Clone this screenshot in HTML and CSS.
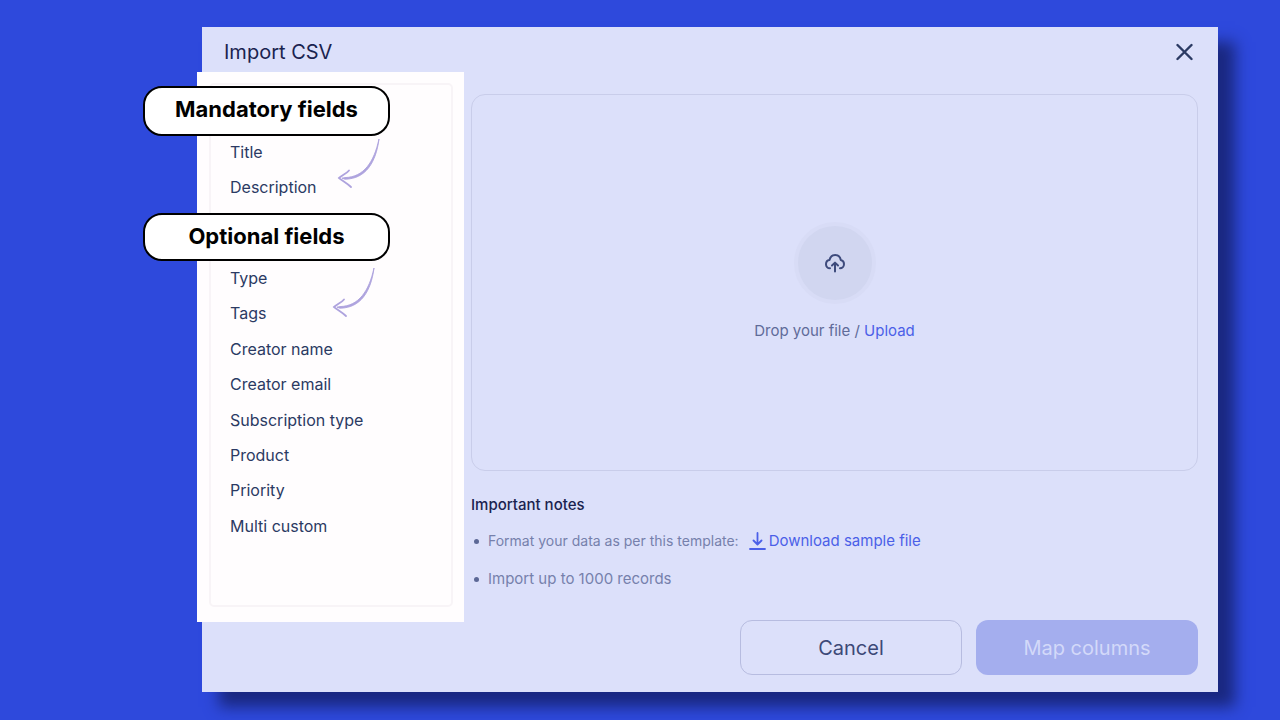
FILE: index.html
```html
<!DOCTYPE html>
<html lang="en">
<head>
<meta charset="utf-8">
<meta name="viewport" content="width=device-width, initial-scale=1">
<title>Import CSV</title>
<link rel="stylesheet" href="styles.css">
</head>
<body>
<main class="dialog" role="dialog" aria-labelledby="dialog-title">
  <header class="dialog-header">
    <h1 class="dialog-title" id="dialog-title">Import CSV</h1>
    <button class="close" type="button" aria-label="Close">
      <svg width="18" height="18" viewBox="0 0 18 18" fill="none" stroke="currentColor" stroke-width="2.4" stroke-linecap="round"><path d="M1.500 2l14 14M15.500 2l-14 14"/></svg>
    </button>
  </header>
  <div class="dialog-body">
    <aside class="side">
      <div class="fields">
        <section class="group">
          <h2 class="callout callout-mandatory">Mandatory fields</h2>
          <svg class="arrow arrow-mandatory" width="46" height="54" viewBox="0 0 46 54" fill="#aea3de"><path d="M42 2C39 25 29 42 8 42.2L5 41.2L8 40.6C27 40 37 25 42 2Z" stroke="#aea3de" stroke-width=".9" stroke-linejoin="round"/><path d="M12 33.500C9.500 36.500 5 38 2 41C5 43.500 10 46 14 50" fill="none" stroke="#aea3de" stroke-width="1.800" stroke-linecap="round"/></svg>
          <ul class="list">
            <li>Title</li>
            <li>Description</li>
          </ul>
        </section>
        <section class="group">
          <h2 class="callout callout-optional">Optional fields</h2>
          <svg class="arrow arrow-optional" width="46" height="54" viewBox="0 0 46 54" fill="#aea3de"><path d="M42 2C39 25 29 42 8 42.2L5 41.2L8 40.6C27 40 37 25 42 2Z" stroke="#aea3de" stroke-width=".9" stroke-linejoin="round"/><path d="M12 33.500C9.500 36.500 5 38 2 41C5 43.500 10 46 14 50" fill="none" stroke="#aea3de" stroke-width="1.800" stroke-linecap="round"/></svg>
          <ul class="list list-optional">
            <li>Type</li>
            <li>Tags</li>
            <li>Creator name</li>
            <li>Creator email</li>
            <li>Subscription type</li>
            <li>Product</li>
            <li>Priority</li>
            <li>Multi custom</li>
          </ul>
        </section>
      </div>
    </aside>
    <section class="content">
      <div class="dropzone">
        <span class="cloud">
          <svg width="20" height="20" viewBox="0 0 20 20" fill="none" stroke="currentColor" stroke-width="2" stroke-linecap="round" stroke-linejoin="round"><path d="M5 15.300C2.500 15.300 1 13.300 1 11.200C1 9 2.500 7.300 4.500 7C5.200 4 7.300 2 10.200 2C13 2 15.200 4 15.800 7C17.700 7.400 19 9.100 19 11.100C19 13.400 17.300 15.300 15 15.300M10 18.500V10M7 12.500L10 9.600L13 12.500"/></svg>
        </span>
        <p class="drop-text">Drop your file / <a class="link" href="#">Upload</a></p>
      </div>
      <h2 class="notes-title">Important notes</h2>
      <ul class="notes">
        <li><span class="hint">Format your data as per this template:</span>
          <a class="link download" href="#"><svg width="17" height="18" viewBox="0 0 17 18" fill="none" stroke="currentColor" stroke-width="1.800" stroke-linecap="round" stroke-linejoin="round"><path d="M8.500 1v11M4.500 8.500l4 4 4-4M1 17h15"/></svg>Download sample file</a>
        </li>
        <li>Import up to 1000 records</li>
      </ul>
    </section>
  </div>
  <footer class="actions">
    <button class="button" type="button">Cancel</button>
    <button class="button button-primary" type="button" disabled>Map columns</button>
  </footer>
</main>
</body>
</html>
```

FILE: styles.css
```css
* { box-sizing: border-box; }

body {
  margin: 0;
  min-height: 100vh;
  display: flex;
  padding: 27px 62px 28px 202px;
  background: #2e49dc;
  color: #2b3a63;
  font: 16px/20px Inter, "Liberation Sans", sans-serif;
}

h1, h2, p, ul { margin: 0; padding: 0; font-weight: 400; }
ul { list-style: none; }
button { font: inherit; color: inherit; cursor: pointer; }

.dialog {
  flex: 1;
  display: flex;
  flex-direction: column;
  background: #dce0fa;
  box-shadow: 17px 15px 14px #1a2880;
}

.dialog-header {
  display: flex;
  align-items: center;
  justify-content: space-between;
  padding: 10px 20px 5px 22px;
}
.dialog-title { font-size: 20px; line-height: 30px; color: #1a234f; }
.close {
  display: grid;
  place-items: center;
  padding: 4px;
  border: 0;
  background: none;
}

.dialog-body { flex: 1; display: flex; gap: 7px; padding-right: 20px; }

.side {
  flex: 0 0 267px;
  display: flex;
  margin-left: -5px;
  padding: 11px 11px 15px 12px;
  background: #fffdfe;
}
.fields {
  position: relative;
  flex: 1;
  display: flex;
  flex-direction: column;
  gap: 56px;
  padding: 50px 19px 0;
  border: 2px solid #f8f4f7;
  border-radius: 5px;
}
.list { line-height: 35px; }
.list-optional { display: grid; grid-auto-rows: 1fr; height: 283px; }

.callout {
  position: absolute;
  left: -68px;
  width: 247px;
  padding: 8px 0 12px;
  border: 2px solid #000;
  border-radius: 19px;
  background: #fff;
  color: #000;
  font-size: 22px;
  line-height: 26px;
  font-weight: 700;
  text-align: center;
}
.callout-mandatory { top: 1px; }
.callout-optional { top: 128px; padding-bottom: 10px; }
.arrow { position: absolute; }
.arrow-mandatory { left: 126px; top: 52px; }
.arrow-optional { left: 121px; top: 181px; }

.content { flex: 1; display: flex; flex-direction: column; padding: 22px 0 33px; }
.dropzone {
  flex: 1;
  display: flex;
  flex-direction: column;
  align-items: center;
  justify-content: center;
  gap: 17px;
  padding-bottom: 2px;
  border: 1px solid #c9cdea;
  border-radius: 14px;
}
.cloud {
  display: grid;
  place-items: center;
  width: 82px;
  height: 82px;
  border: 4px solid #d8dcf6;
  border-radius: 50%;
  background: #d1d6f0;
  color: #3e4b7c;
}
.drop-text { color: #606b99; font-size: 15px; }
.link { color: #4b5fe8; text-decoration: none; }

.notes-title {
  margin: 24px 0 16px;
  color: #1a234f;
  font-size: 15px;
  font-weight: 500;
}
.notes { display: grid; gap: 18px; color: #7680ac; font-size: 15px; }
.notes li { display: flex; align-items: center; }
.notes li::before {
  content: "";
  width: 5px;
  height: 5px;
  margin: 0 9px 0 3px;
  border-radius: 50%;
  background: #5c6896;
}
.hint { font-size: 14px; }
.download { display: inline-flex; align-items: center; gap: 3px; margin-left: 10px; }

.actions {
  display: flex;
  justify-content: flex-end;
  gap: 14px;
  padding: 0 20px 17px;
  margin-top: -2px;
}
.button {
  width: 222px;
  height: 55px;
  border: 1px solid #b7bce0;
  border-radius: 12px;
  background: none;
  color: #3c4977;
  font-size: 20px;
}
.button-primary { border: 0; background: #a4aeee; color: #d3d9f9; cursor: default; }
```
